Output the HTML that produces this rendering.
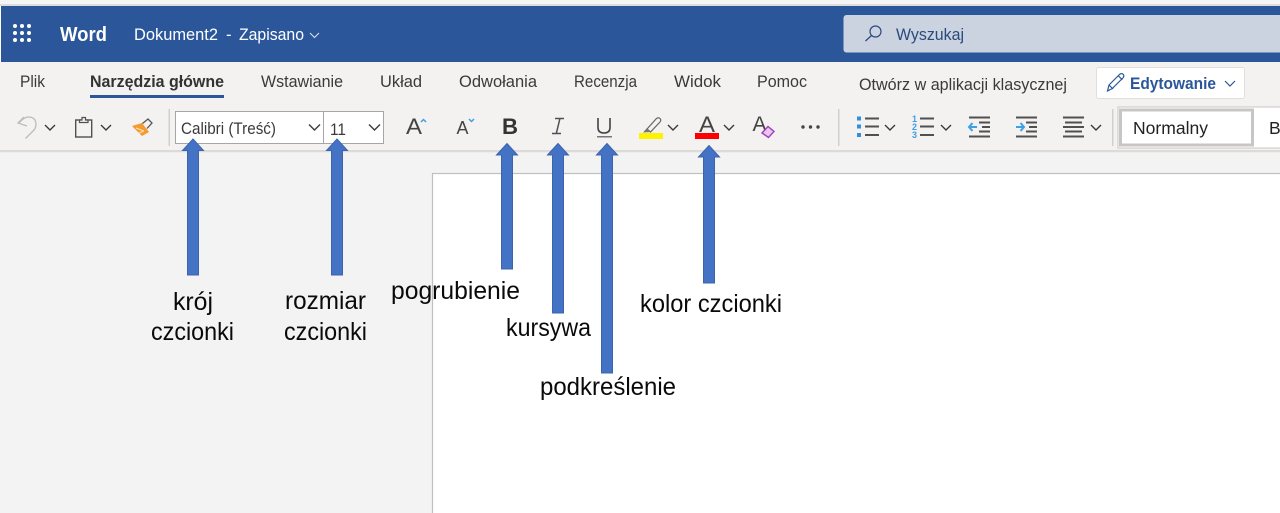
<!DOCTYPE html>
<html lang="pl"><head><meta charset="utf-8"><title>Word</title>
<style>
html,body{margin:0;padding:0;background:#fff;width:1280px;height:513px;overflow:hidden}
svg{display:block;filter:blur(.35px)}
text{font-family:"Liberation Sans",sans-serif}
.t{font-size:16.5px;fill:#3b3a39}
.h{font-size:16.5px;fill:#fff}
.c{font-size:25px;fill:#0a0a0a}
.ch{fill:none;stroke:#3b3a39;stroke-width:1.4}
.g{fill:none;stroke:#505050;stroke-width:1.9}
.b{fill:none;stroke:#3f9fe3;stroke-width:2}
.ar{fill:#4472c4;stroke:#3a64ad;stroke-width:1}
</style></head><body>
<svg width="1280" height="513" viewBox="0 0 1280 513" xmlns="http://www.w3.org/2000/svg">
<rect width="1280" height="513" fill="#fff"/>
<rect width="1280" height="5" y="0" fill="#f4f4f4"/>
<rect y="4" width="1280" height="2" fill="#dddddd"/>
<rect x="1" y="6" width="1279" height="56" fill="#2b579a"/>
<rect x="0" y="62" width="1280" height="89" fill="#f3f2f1"/>
<rect x="0" y="151" width="1280" height="362" fill="#f3f3f3"/>
<rect x="0" y="150" width="1280" height="2" fill="#dcdbda"/>
<rect x="0" y="152" width="1280" height="1" fill="#ececeb"/>
<!-- page -->
<rect x="432.500" y="173.500" width="860" height="350" fill="#fff" stroke="#bfbfbf" stroke-width="1.200"/>

<!-- header -->
<g fill="#fff">
<circle cx="15" cy="26" r="2"/><circle cx="22" cy="26" r="2"/><circle cx="29" cy="26" r="2"/>
<circle cx="15" cy="33" r="2"/><circle cx="22" cy="33" r="2"/><circle cx="29" cy="33" r="2"/>
<circle cx="15" cy="40" r="2"/><circle cx="22" cy="40" r="2"/><circle cx="29" cy="40" r="2"/>
</g>
<text x="60" y="41" font-size="20" font-weight="700" fill="#fff" textLength="47" lengthAdjust="spacingAndGlyphs">Word</text>
<text x="134" y="40" class="h" textLength="84" lengthAdjust="spacingAndGlyphs">Dokument2</text>
<text x="226" y="40" class="h">-</text>
<text x="239" y="40" class="h" textLength="65" lengthAdjust="spacingAndGlyphs">Zapisano</text>
<path d="M310 33l4.500 4.500 4.500-4.500" fill="none" stroke="#dfe6f0" stroke-width="1"/>
<rect x="843.500" y="15" width="440" height="37.500" rx="3" fill="#cbd3e0"/>
<circle cx="875.500" cy="31.500" r="5.500" fill="none" stroke="#2b4a7c" stroke-width="1.200"/>
<path d="M871.500 35.500l-6 5.500" stroke="#2b4a7c" stroke-width="1.300" fill="none"/>
<text x="896" y="40" font-size="16.500" fill="#2b4a7c" textLength="68" lengthAdjust="spacingAndGlyphs">Wyszukaj</text>

<!-- tabs -->
<text x="20" y="87" class="t" textLength="25" lengthAdjust="spacingAndGlyphs">Plik</text>
<text x="90" y="87" class="t" font-weight="700" style="fill:#333" textLength="134" lengthAdjust="spacingAndGlyphs">Narzędzia główne</text>
<rect x="90" y="95" width="134" height="3" fill="#2b579a"/>
<text x="261" y="87" class="t" textLength="82" lengthAdjust="spacingAndGlyphs">Wstawianie</text>
<text x="380" y="87" class="t" textLength="42" lengthAdjust="spacingAndGlyphs">Układ</text>
<text x="459" y="87" class="t" textLength="78" lengthAdjust="spacingAndGlyphs">Odwołania</text>
<text x="574" y="87" class="t" textLength="63" lengthAdjust="spacingAndGlyphs">Recenzja</text>
<text x="674" y="87" class="t" textLength="47" lengthAdjust="spacingAndGlyphs">Widok</text>
<text x="757" y="87" class="t" textLength="50" lengthAdjust="spacingAndGlyphs">Pomoc</text>
<text x="859" y="90" class="t" textLength="208" lengthAdjust="spacingAndGlyphs">Otwórz w aplikacji klasycznej</text>
<rect x="1096.500" y="67.500" width="148" height="31" rx="2" fill="#fff" stroke="#e1dfdd"/>
<path d="M1107.500 91l1.500-6 11-11q2-1 3.200.4t.1 3.100l-11 11zM1109 85l4 4M1118.500 76l3.800 3.800" fill="none" stroke="#2b579a" stroke-width="1.200"/>
<text x="1130" y="89" font-size="16.500" font-weight="700" fill="#2b579a" textLength="86" lengthAdjust="spacingAndGlyphs">Edytowanie</text>
<path d="M1225 81l5 5 5-5" fill="none" stroke="#2b579a" stroke-width="1.200"/>

<!-- toolbar: undo & clipboard -->
<path d="M24 117l-6 6 9 3M18.500 123l2-1.500q4-4.500 8-4.500 7 0 7.500 7 0 4-2.500 6.500l-8 8" fill="none" stroke="#bdbcbb" stroke-width="1.300"/>
<path class="ch" d="M45 125l5 5 5-5M101 125l5 5 5-5"/>
<rect x="75.700" y="120" width="16" height="17" fill="none" stroke="#505050" stroke-width="1.400"/>
<path d="M79.500 122.500v-2.500h2.500v-2.500h3.500v2.500h2.500v2.500z" fill="#f3f2f1" stroke="#505050" stroke-width="1.200"/>
<path d="M132 126l10-3 7 9-7 4z" fill="#f39a30"/>
<path d="M136 128l8 3M139 133l5-2" fill="none" stroke="#fbe3c4" stroke-width="1"/>
<path d="M142.500 123.500l5.500-4.500 4 4-5 5.500" fill="none" stroke="#555" stroke-width="1.300"/>
<rect x="168.500" y="109" width="1.500" height="37" fill="#d2d0ce"/>

<!-- font boxes -->
<rect x="175.500" y="111.500" width="208" height="32" fill="#fff" stroke="#a8a6a4"/>
<path d="M323.500 111v32" stroke="#a8a6a4"/>
<text x="181" y="134" class="t" textLength="95" lengthAdjust="spacingAndGlyphs">Calibri (Treść)</text>
<text x="330" y="135" class="t" textLength="16" lengthAdjust="spacingAndGlyphs">11</text>
<path class="ch" d="M309 124.500l5.500 5.500 5.500-5.500M369 124.500l5.500 5.500 5.500-5.500"/>

<!-- grow/shrink -->
<text x="406" y="134" font-size="22" fill="#444" textLength="16" lengthAdjust="spacingAndGlyphs">A</text>
<path d="M421 122l2.500-2.500 2.500 2.500" fill="none" stroke="#3f9fe3" stroke-width="1.500"/>
<text x="456.500" y="134" font-size="18" fill="#444" textLength="12" lengthAdjust="spacingAndGlyphs">A</text>
<path d="M469 119l2.500 2.500 2.500-2.500" fill="none" stroke="#3f9fe3" stroke-width="1.500"/>
<!-- B I U -->
<text x="502" y="134" font-size="22" font-weight="700" fill="#333" textLength="16" lengthAdjust="spacingAndGlyphs">B</text>
<path d="M555 118.500h9M552 133.500h9M559.800 119l-3.500 14.500" stroke="#505050" stroke-width="1.500" fill="none"/>
<path d="M598 118v9.500q0 5.500 6 5.500t6-5.500V118" fill="none" stroke="#444" stroke-width="1.600"/>
<rect x="597" y="136" width="15" height="1.500" fill="#777"/>
<!-- highlight -->
<path d="M647 129l9.500-10.500q2-1.500 3.500 0t0 3.500l-9.500 10z" fill="none" stroke="#666" stroke-width="1.200"/>
<path d="M643 132.500l3.500-4 4.500 3.500z" fill="#777"/>
<rect x="639" y="133" width="24" height="6" fill="#fff200"/>
<path class="ch" d="M668 125l5 5 5-5M724 125l5 5 5-5"/>
<!-- font colour -->
<text x="699" y="132" font-size="22" fill="#444" textLength="16" lengthAdjust="spacingAndGlyphs">A</text>
<rect x="695" y="133" width="24" height="6" fill="#f00"/>
<!-- clear -->
<text x="752.500" y="131" font-size="21" fill="#444" textLength="14" lengthAdjust="spacingAndGlyphs">A</text>
<path d="M762 133l6-6.500 6 5-5.500 6z" fill="#e6c8ef" stroke="#a23ebd" stroke-width="1.400"/>
<g fill="#444"><circle cx="803" cy="127" r="1.700"/><circle cx="810.500" cy="127" r="1.700"/><circle cx="818" cy="127" r="1.700"/></g>
<rect x="838" y="109" width="1.500" height="37" fill="#d2d0ce"/>

<!-- lists -->
<g fill="#2f8fdb"><rect x="857" y="116.500" width="4" height="4"/><rect x="857" y="124.500" width="4" height="4"/><rect x="857" y="133" width="4" height="4"/></g>
<path class="g" d="M865 118.500h14M865 126.500h14M865 135h14"/>
<path class="ch" d="M885 125l5 5 5-5M941 125l5 5 5-5M1091 125l5 5 5-5"/>
<text x="912" y="122" font-size="9" font-weight="700" fill="#3f9fe3">1</text>
<text x="912" y="130" font-size="9" font-weight="700" fill="#3f9fe3">2</text>
<text x="912" y="138" font-size="9" font-weight="700" fill="#3f9fe3">3</text>
<path class="g" d="M920 118.500h14M920 126.500h14M920 135h14"/>
<path class="g" d="M969 117.500h21M979 122.500h11M982 127h8M979 131.500h11M969 136.500h21"/>
<path class="b" d="M977 127h-8M972.500 123l-3.500 4 3.500 4"/>
<path class="g" d="M1016 117.500h21M1026 122.500h11M1029 127h8M1026 131.500h11M1016 136.500h21"/>
<path class="b" d="M1016 127h8M1020.500 123l3.500 4-3.500 4"/>
<path class="g" d="M1063 117.500h21M1065 122.500h17M1063 127h21M1065 131.500h17M1063 136.500h21"/>
<rect x="1112" y="109" width="1.500" height="37" fill="#d2d0ce"/>

<!-- styles -->
<rect x="1118" y="107" width="170" height="41" fill="#fff" stroke="#c8c6c4"/>
<rect x="1120.500" y="110" width="132" height="35" fill="#fff" stroke="#c8c6c4" stroke-width="3"/>
<text x="1133" y="134" font-size="17.500" fill="#222" textLength="75" lengthAdjust="spacingAndGlyphs">Normalny</text>
<text x="1269" y="134" font-size="17.500" fill="#222">Be</text>

<!-- arrows -->
<path class="ar" d="M193 139l10.500 11.500h-5v124.500h-11V150.500h-5z"/>
<path class="ar" d="M337 139l10.500 11.500h-5v124.500h-11V150.500h-5z"/>
<path class="ar" d="M507 143.500l10.500 11.500h-5v114h-11V155h-5z"/>
<path class="ar" d="M558 143.500l10.500 11.500h-5v158h-11V155h-5z"/>
<path class="ar" d="M607 143.500l10.500 11.500h-5v218h-11V155h-5z"/>
<path class="ar" d="M709 145.500l10.500 11.500h-5v126h-11V157h-5z"/>

<!-- captions -->
<text x="173" y="310" class="c" textLength="40" lengthAdjust="spacingAndGlyphs">krój</text>
<text x="151" y="340" class="c" textLength="83" lengthAdjust="spacingAndGlyphs">czcionki</text>
<text x="285" y="309" class="c" textLength="81" lengthAdjust="spacingAndGlyphs">rozmiar</text>
<text x="284" y="340" class="c" textLength="83" lengthAdjust="spacingAndGlyphs">czcionki</text>
<text x="391" y="299" class="c" textLength="129" lengthAdjust="spacingAndGlyphs">pogrubienie</text>
<text x="506" y="336" class="c" textLength="85" lengthAdjust="spacingAndGlyphs">kursywa</text>
<text x="540" y="395" class="c" textLength="136" lengthAdjust="spacingAndGlyphs">podkreślenie</text>
<text x="640" y="312" class="c" textLength="142" lengthAdjust="spacingAndGlyphs">kolor czcionki</text>
</svg>
</body></html>
